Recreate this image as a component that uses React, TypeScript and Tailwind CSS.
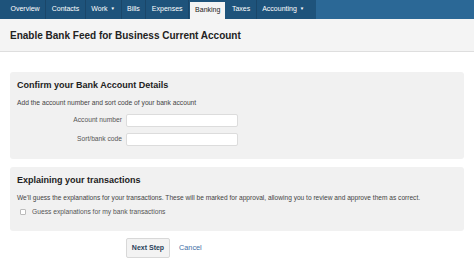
// Bank feed setup page — nav tabs, header, two grey panels, actions

const tabs = [
  { label: "Overview" },
  { label: "Contacts" },
  { label: "Work", caret: true },
  { label: "Bills" },
  { label: "Expenses" },
  { label: "Banking", active: true },
  { label: "Taxes" },
  { label: "Accounting", caret: true },
];

function Caret() {
  return <span className="ml-[3px] inline-block text-[4.5px] align-middle">▼</span>;
}

export default function App() {
  return (
    <div className="w-[474px] h-[279px] bg-white overflow-hidden text-[#333]" style={{ fontFamily: '"Liberation Sans", Arial, sans-serif' }}>
      {/* ── Barre de navigation ─────────────────────────── */}
      <nav className="flex h-[19px] bg-[#2b6896]">
        <div className="flex h-full bg-[#1e537b] pl-[5px] pr-[6px]">
          {tabs.map((t) => (
            <div
              key={t.label}
              className={
                t.active
                  ? "flex items-center h-[17px] mt-[2px] px-[5px] mx-[1px] bg-[#f4f4f4] text-[#222] text-[7px]"
                  : "flex items-center h-full px-[5.5px] text-white text-[7px] border-r border-[#1a4669] last:border-r-0"
              }
            >
              {t.label}
              {t.caret && <Caret />}
            </div>
          ))}
        </div>
      </nav>

      {/* ── En-tête ─────────────────────────────────────── */}
      <header className="h-[33px] bg-[#f4f4f4] border-b border-[#dedede] flex items-center px-[10px]">
        <h1 className="text-[10px] font-bold text-[#222]">Enable Bank Feed for Business Current Account</h1>
      </header>

      {/* ── Coordonnées bancaires ───────────────────────── */}
      <section className="mx-[10px] mt-[20px] h-[87px] bg-[#f1f1f1] rounded-[3px] pt-[8px]">
        <h2 className="px-[7px] text-[9px] font-bold text-[#222] leading-[10px]">Confirm your Bank Account Details</h2>
        <p className="px-[7px] mt-[9px] text-[6.7px] leading-[8px] text-[#444]">
          Add the account number and sort code of your bank account
        </p>
        <div className="mt-[7px] flex flex-col gap-[6px]">
          {["Account number", "Sort/bank code"].map((l) => (
            <div key={l} className="flex items-center gap-[4px]">
              <label className="w-[112px] text-right text-[6.7px] text-[#555]">{l}</label>
              <input className="w-[112px] h-[13px] bg-white border border-[#dcdcdc] rounded-[2px] outline-none" />
            </div>
          ))}
        </div>
      </section>

      {/* ── Explications ────────────────────────────────── */}
      <section className="mx-[10px] mt-[8px] h-[64px] bg-[#f1f1f1] rounded-[3px] pt-[8px] px-[7px]">
        <h2 className="text-[9px] font-bold text-[#222] leading-[10px]">Explaining your transactions</h2>
        <p className="mt-[9px] text-[6.6px] leading-[8px] text-[#444] whitespace-nowrap">
          We'll guess the explanations for your transactions. These will be marked for approval, allowing you to review and approve them as correct.
        </p>
        <label className="mt-[5px] ml-[3px] flex items-center gap-[6px] text-[6.7px] text-[#555]">
          <span className="w-[6px] h-[6px] bg-white border border-[#bbb] rounded-[1px]" />
          Guess explanations for my bank transactions
        </label>
      </section>

      {/* ── Actions ─────────────────────────────────────── */}
      <div className="mt-[7px] pl-[126px] flex items-center gap-[9px]">
        <button className="h-[20px] w-[44px] bg-[#f3f3f3] border border-[#d8d8d8] rounded-[2px] text-[7px] font-bold text-[#2a3f5a]">
          Next Step
        </button>
        <a className="text-[7.3px] text-[#3f6fa6]">Cancel</a>
      </div>
    </div>
  );
}
